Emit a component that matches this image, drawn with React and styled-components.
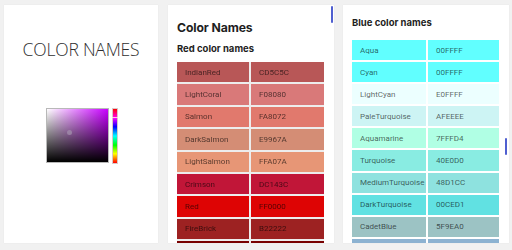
import React from "react";
import styled, { createGlobalStyle } from "styled-components";

const GlobalStyle = createGlobalStyle`
    html, body {
        margin: 0;
        padding: 0;
        background: #f1f1f1;
        font-family: "Roboto", "Liberation Sans", sans-serif;
    }
`;

const redColors = [
    ["IndianRed", "CD5C5C"],
    ["LightCoral", "F08080"],
    ["Salmon", "FA8072"],
    ["DarkSalmon", "E9967A"],
    ["LightSalmon", "FFA07A"],
    ["Crimson", "DC143C"],
    ["Red", "FF0000"],
    ["FireBrick", "B22222"],
    ["DarkRed", "8B0000"],
];

const blueColors = [
    ["Aqua", "00FFFF"],
    ["Cyan", "00FFFF"],
    ["LightCyan", "E0FFFF"],
    ["PaleTurquoise", "AFEEEE"],
    ["Aquamarine", "7FFFD4"],
    ["Turquoise", "40E0D0"],
    ["MediumTurquoise", "48D1CC"],
    ["DarkTurquoise", "00CED1"],
    ["CadetBlue", "5F9EA0"],
    ["SteelBlue", "4682B4"],
];

// mix a hex colour with white (amount = share of the colour)
const tint = (hex, amount) => {
    const n = parseInt(hex, 16);
    const ch = [(n >> 16) & 255, (n >> 8) & 255, n & 255].map((c) =>
        Math.round(c * amount + 255 * (1 - amount))
    );
    return `rgb(${ch.join(",")})`;
};

//---styled-------------------------------------------

const Screen = styled.div`
    display: flex;
    gap: 10px;
    padding: 5px 0 0 4px;
    width: 512px;
    height: 250px;
    box-sizing: border-box;
    overflow: hidden;
`;

const Panel = styled.div`
    position: relative;
    flex: 0 0 ${(p) => p.$width}px;
    height: 238px;
    background: #fff;
    box-shadow: 0 0 1px rgba(0, 0, 0, 0.08);
    overflow: hidden;
    box-sizing: border-box;
    padding: ${(p) => p.$pad || "0"};
    margin-right: ${(p) => p.$mr || 0}px;
`;

const CoverPanel = styled(Panel)`
    display: flex;
    flex-direction: column;
    align-items: center;
`;

const AppTitle = styled.div`
    margin-top: 32px;
    font-family: "Open Sans", "Liberation Sans", sans-serif;
    font-weight: 300;
    font-size: 17.5px;
    line-height: 24px;
    color: #2e2e2e;
    letter-spacing: -0.2px;
`;

const Picker = styled.div`
    display: flex;
    gap: 3px;
    margin-top: 47px;
    margin-left: 1px;
`;

const SatBox = styled.div`
    position: relative;
    width: 63px;
    height: 55px;
    box-sizing: border-box;
    border: 1px solid #b8b8b8;
    background: linear-gradient(to top, #000, rgba(0, 0, 0, 0)),
        linear-gradient(to right, #fff, #c800ff);
`;

const Dot = styled.div`
    position: absolute;
    left: 20px;
    top: 21px;
    width: 5px;
    height: 5px;
    border-radius: 50%;
    background: rgba(160, 140, 170, 0.8);
`;

const HueBar = styled.div`
    position: relative;
    width: 6px;
    height: 56px;
    box-sizing: border-box;
    border: 1px solid #d8c8c8;
    background: linear-gradient(
        to bottom,
        #f00 0%,
        #f0f 17%,
        #00f 33%,
        #0ff 50%,
        #0f0 67%,
        #ff0 83%,
        #f00 100%
    );
`;

const HueMark = styled.div`
    position: absolute;
    left: -1px;
    right: -1px;
    top: 8px;
    height: 1px;
    background: rgba(255, 220, 230, 0.9);
`;

const Title = styled.div`
    font-family: "Inter", "Liberation Sans", sans-serif;
    font-weight: 700;
    font-size: 12.2px;
    line-height: 16px;
    color: #1e1e1e;
    letter-spacing: -0.1px;
    margin-bottom: 7px;
`;

const SubTitle = styled.div`
    font-family: "Inter", "Liberation Sans", sans-serif;
    font-weight: 700;
    font-size: 9.5px;
    line-height: 12px;
    color: #1e1e1e;
    margin-bottom: ${(p) => p.$mb}px;
`;

const Table = styled.div`
    display: grid;
    grid-template-columns: ${(p) => p.$cols};
    grid-auto-rows: ${(p) => p.$row}px;
    gap: 2px;
    width: 147px;
    background: #fff;
    filter: ${(p) => p.$filter || "none"};
`;

const Cell = styled.div`
    display: flex;
    align-items: center;
    padding-left: 8px;
    font-family: "Roboto", "Liberation Sans", sans-serif;
    font-size: 8px;
    color: rgba(0, 0, 0, 0.62);
    background: ${(p) => p.$bg};
    white-space: nowrap;
    overflow: hidden;
`;

const ScrollThumb = styled.div`
    position: absolute;
    right: ${(p) => p.$right}px;
    top: ${(p) => p.$top}px;
    width: 2.5px;
    height: 17px;
    border-radius: 2px;
    background: #4f5fd0;
`;

//---
const ColorTable = ({ rows, cols, row, mix, filter }) => (
    <Table $cols={cols} $row={row} $filter={filter}>
        {rows.map(([name, hex]) => {
            const bg = mix ? tint(hex, mix) : "#" + hex;
            return (
                <React.Fragment key={name}>
                    <Cell $bg={bg}>{name}</Cell>
                    <Cell $bg={bg}>{hex}</Cell>
                </React.Fragment>
            );
        })}
    </Table>
);

const App = () => {
    return (
        <>
            <GlobalStyle />
            <Screen>
                <CoverPanel $width={154}>
                    <AppTitle>COLOR NAMES</AppTitle>
                    <Picker>
                        <SatBox>
                            <Dot />
                        </SatBox>
                        <HueBar>
                            <HueMark />
                        </HueBar>
                    </Picker>
                </CoverPanel>
                <Panel $width={166} $pad="15px 10px 0 9px" $mr={-1}>
                    <Title>Color Names</Title>
                    <SubTitle $mb={7}>Red color names</SubTitle>
                    <ColorTable
                        rows={redColors}
                        cols="72px 73px"
                        row={20.4}
                        filter="brightness(0.93) saturate(0.92)"
                    />
                    <ScrollThumb $right={1} $top={1} />
                </Panel>
                <Panel $width={166} $pad="12px 10px 0 9px">
                    <SubTitle $mb={11}>Blue color names</SubTitle>
                    <ColorTable
                        rows={blueColors}
                        cols="74px 71px"
                        row={20.1}
                        mix={0.62}
                    />
                    <ScrollThumb $right={2} $top={133} />
                </Panel>
            </Screen>
        </>
    );
};

export default App;
